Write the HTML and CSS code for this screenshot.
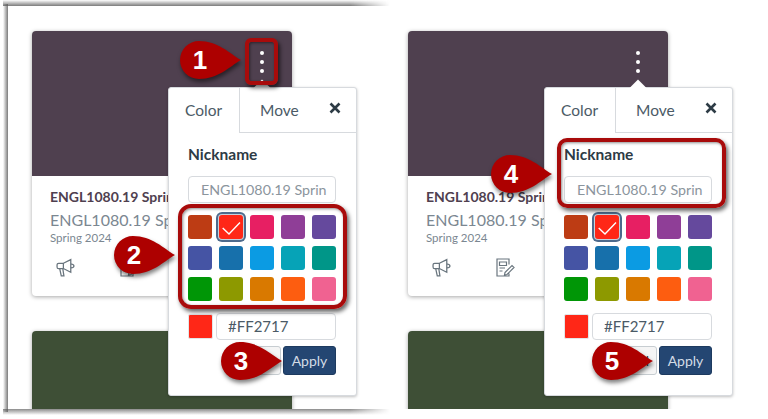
FILE: index.html
```html
<!DOCTYPE html>
<html lang="en">
<head>
    <meta charset="UTF-8">
    <title>Course Card Nickname and Color</title>
    <link rel="stylesheet" href="styles.css">
</head>
<body>
    <svg class="defs" width="0" height="0">
        <symbol id="drop" viewBox="0 0 62 40">
            <path d="M62 20C50 13 39 1 20 1A19 19 0 0 0 20 39C39 39 50 27 62 20Z" fill="#ad0000"/>
        </symbol>
        <symbol id="megaphone" viewBox="0 0 18 18">
            <path d="M7 5L14 1.500V13.500L7 10H2.500Q1 10 1 8.500V6.500Q1 5 2.500 5ZM7 5V10M14 5.500Q17 6 17 7.500Q17 9 14 9.500M3.500 10L5 17H7.500L6.500 10.500" fill="none" stroke="#69757e" stroke-width="1.200"/>
        </symbol>
        <symbol id="assignment" viewBox="0 0 19 19">
            <path d="M13 6.500V1H1V18H13V15.500M3.500 4H10.500V7.500H3.500ZM3.500 10H9M3.500 13H6.500M9 14.500L16 7.500L18 9.500L11 16.500L8.500 17Z" fill="none" stroke="#69757e" stroke-width="1.200"/>
        </symbol>
        <symbol id="close" viewBox="0 0 12 12">
            <path d="M1.500 1.500L10.500 10.500M10.500 1.500L1.500 10.500" fill="none" stroke="#2d3b45" stroke-width="2.600"/>
        </symbol>
        <symbol id="check" viewBox="0 0 24 24">
            <path d="M3.700 13L10 19L21 7.600" fill="none" stroke="#ffffff" stroke-width="1.400"/>
        </symbol>
    </svg>

    <div class="page">
        <div class="shot">
            <div class="card">
                <div class="card-header plum">
                    <div class="dots"><i></i><i></i><i></i></div>
                </div>
                <div class="card-body">
                    <div class="card-title">ENGL1080.19 Spring 2024</div>
                    <div class="card-code">ENGL1080.19 Spring 2024</div>
                    <div class="card-term">Spring 2024</div>
                    <div class="card-icons">
                        <svg class="icon"><use href="#megaphone"/></svg>
                        <svg class="icon"><use href="#assignment"/></svg>
                    </div>
                </div>
            </div>
            <div class="card">
                <div class="card-header green"></div>
            </div>

            <div class="popover">
                <div class="tabs">
                    <div class="tab active">Color</div>
                    <div class="tab">Move <svg class="close"><use href="#close"/></svg></div>
                </div>
                <div class="popover-body">
                    <div class="nickname">Nickname</div>
                    <div class="field">ENGL1080.19 Sprin</div>
                    <div class="swatches">
                        <span class="swatch c1"></span>
                        <span class="swatch c2 selected"><svg class="check"><use href="#check"/></svg></span>
                        <span class="swatch c3"></span>
                        <span class="swatch c4"></span>
                        <span class="swatch c5"></span>
                        <span class="swatch c6"></span>
                        <span class="swatch c7"></span>
                        <span class="swatch c8"></span>
                        <span class="swatch c9"></span>
                        <span class="swatch c10"></span>
                        <span class="swatch c11"></span>
                        <span class="swatch c12"></span>
                        <span class="swatch c13"></span>
                        <span class="swatch c14"></span>
                        <span class="swatch c15"></span>
                    </div>
                    <div class="hex-row">
                        <span class="hex-preview"></span>
                        <div class="hex-field">#FF2717</div>
                    </div>
                    <div class="actions">
                        <div class="btn-cancel">Cancel</div>
                        <div class="btn-apply">Apply</div>
                    </div>
                </div>
            </div>

            <div class="highlight hl-dots"></div>
            <div class="highlight hl-swatches"></div>
            <div class="callout call-1"><svg><use href="#drop"/></svg><span>1</span></div>
            <div class="callout call-2"><svg><use href="#drop"/></svg><span>2</span></div>
            <div class="callout call-3"><svg><use href="#drop"/></svg><span>3</span></div>
        </div>

        <div class="shot">
            <div class="card">
                <div class="card-header plum">
                    <div class="dots"><i></i><i></i><i></i></div>
                </div>
                <div class="card-body">
                    <div class="card-title">ENGL1080.19 Spring 2024</div>
                    <div class="card-code">ENGL1080.19 Spring 2024</div>
                    <div class="card-term">Spring 2024</div>
                    <div class="card-icons">
                        <svg class="icon"><use href="#megaphone"/></svg>
                        <svg class="icon"><use href="#assignment"/></svg>
                    </div>
                </div>
            </div>
            <div class="card">
                <div class="card-header green"></div>
            </div>

            <div class="popover">
                <div class="tabs">
                    <div class="tab active">Color</div>
                    <div class="tab">Move <svg class="close"><use href="#close"/></svg></div>
                </div>
                <div class="popover-body">
                    <div class="nickname">Nickname</div>
                    <div class="field">ENGL1080.19 Sprin</div>
                    <div class="swatches">
                        <span class="swatch c1"></span>
                        <span class="swatch c2 selected"><svg class="check"><use href="#check"/></svg></span>
                        <span class="swatch c3"></span>
                        <span class="swatch c4"></span>
                        <span class="swatch c5"></span>
                        <span class="swatch c6"></span>
                        <span class="swatch c7"></span>
                        <span class="swatch c8"></span>
                        <span class="swatch c9"></span>
                        <span class="swatch c10"></span>
                        <span class="swatch c11"></span>
                        <span class="swatch c12"></span>
                        <span class="swatch c13"></span>
                        <span class="swatch c14"></span>
                        <span class="swatch c15"></span>
                    </div>
                    <div class="hex-row">
                        <span class="hex-preview"></span>
                        <div class="hex-field">#FF2717</div>
                    </div>
                    <div class="actions">
                        <div class="btn-cancel">Cancel</div>
                        <div class="btn-apply">Apply</div>
                    </div>
                </div>
            </div>

            <div class="highlight hl-nickname"></div>
            <div class="callout call-4"><svg><use href="#drop"/></svg><span>4</span></div>
            <div class="callout call-5"><svg><use href="#drop"/></svg><span>5</span></div>
        </div>
    </div>
</body>
</html>
```
FILE: styles.css
```css
* {
    margin: 0;
    padding: 0;
    box-sizing: border-box;
}

body {
    font-family: Lato, 'Noto Sans', sans-serif;
    background-color: white;
    width: 768px;
    height: 419px;
    overflow: hidden;
}

.defs {
    display: block;
}

.page {
    position: relative;
    display: flex;
    padding: 6px 0 0 8px;
}

/* window shadow of the first screenshot, fades out to the right */
.page::before {
    content: "";
    position: absolute;
    left: 0;
    top: 0;
    width: 392px;
    height: 419px;
    background:
        linear-gradient(to bottom, rgba(90, 90, 90, 0), rgba(90, 90, 90, 0.8)) 3px 0 / 100% 6px no-repeat,
        linear-gradient(to top, rgba(90, 90, 90, 0), rgba(90, 90, 90, 0.7)) 3px 409px / 100% 6px no-repeat,
        linear-gradient(to right, rgba(90, 90, 90, 0), rgba(90, 90, 90, 0.8)) 3px 4px / 5px 408px no-repeat;
    -webkit-mask-image: linear-gradient(to right, black 350px, transparent 390px);
    mask-image: linear-gradient(to right, black 350px, transparent 390px);
}

.shot {
    position: relative;
    flex: none;
    width: 376px;
    height: 403px;
    padding: 25px 0 0 24px;
    overflow: hidden;
}

.card {
    width: 260px;
    margin-bottom: 35px;
    background-color: white;
    border-radius: 4px;
    box-shadow: 0 1px 4px rgba(0, 0, 0, 0.35);
    overflow: hidden;
}

.card-header {
    height: 145px;
    padding: 20px 0 0 228px;
}

.plum {
    background-color: #4f404f;
}

.green {
    background-color: #3e4f36;
}

.dots {
    display: flex;
    flex-direction: column;
    gap: 5px;
    width: 4px;
}

.dots i {
    display: block;
    width: 4px;
    height: 4px;
    border-radius: 50%;
    background-color: white;
}

.card-body {
    height: 120px;
    padding: 12px 18px;
    white-space: nowrap;
}

.card-title {
    font-size: 14px;
    font-weight: bold;
    line-height: 18px;
    color: #4f404f;
}

.card-code {
    margin-top: 4px;
    font-size: 16px;
    line-height: 20px;
    color: #7b8791;
}

.card-term {
    margin-top: 1px;
    font-size: 11.5px;
    line-height: 14px;
    color: #7b8791;
}

.card-icons {
    display: flex;
    gap: 45px;
    margin: 13px 0 0 6px;
}

.icon {
    width: 19px;
    height: 19px;
}

.popover {
    position: absolute;
    left: 160px;
    top: 81px;
    width: 189px;
    height: 309px;
    background-color: white;
    border: 1px solid #d7dade;
    border-radius: 3px;
    box-shadow: 0 1px 3px rgba(0, 0, 0, 0.25);
}

.popover::before {
    content: "";
    position: absolute;
    left: 87px;
    top: -6px;
    width: 12px;
    height: 12px;
    background-color: white;
    transform: rotate(45deg);
}

.tabs {
    position: relative;
    display: flex;
    height: 45px;
    font-size: 15.5px;
    line-height: 45px;
    color: #4b5a66;
}

.tab {
    display: flex;
    flex: 1;
    justify-content: space-between;
    align-items: center;
    padding: 0 15px 0 20px;
    border-bottom: 1px solid #d7dade;
}

.tab.active {
    flex: none;
    width: 71px;
    padding: 0 0 0 16px;
    border-right: 1px solid #d7dade;
    border-bottom: none;
}

.close {
    width: 12px;
    height: 12px;
    margin-top: -4px;
}

.popover-body {
    position: relative;
    padding: 11px 20px 0 19px;
}

.nickname {
    font-size: 15.5px;
    font-weight: bold;
    line-height: 20px;
    color: #2d3b45;
}

.field {
    height: 27px;
    margin-top: 12px;
    padding-left: 12px;
    font-size: 14.25px;
    line-height: 25px;
    color: #8b959d;
    white-space: nowrap;
    border: 1px solid #d7dade;
    border-radius: 4px;
}

.swatches {
    display: grid;
    grid-template-columns: repeat(5, 24px);
    justify-content: space-between;
    row-gap: 7px;
    margin-top: 12px;
}

.swatch {
    display: block;
    height: 24px;
    border-radius: 3px;
}

.selected {
    box-shadow: 0 0 0 1px #c5d0dc, 0 0 0 3px #4d6a8c;
}

.check {
    display: block;
    width: 24px;
    height: 24px;
}

.c1 { background-color: #bd3c14; }
.c2 { background-color: #ff2717; }
.c3 { background-color: #e71f63; }
.c4 { background-color: #8f3e97; }
.c5 { background-color: #65499d; }
.c6 { background-color: #4554a4; }
.c7 { background-color: #1770ab; }
.c8 { background-color: #0b9be3; }
.c9 { background-color: #06a3b7; }
.c10 { background-color: #009688; }
.c11 { background-color: #009606; }
.c12 { background-color: #8d9900; }
.c13 { background-color: #d97900; }
.c14 { background-color: #fd5d10; }
.c15 { background-color: #f06291; }

.hex-row {
    display: flex;
    align-items: center;
    gap: 3px;
    margin-top: 12px;
}

.hex-preview {
    flex: none;
    width: 25px;
    height: 25px;
    background-color: #ff2717;
    border: 1px solid #e3e6e8;
    border-radius: 2px;
}

.hex-field {
    flex: 1;
    height: 27px;
    padding-left: 11px;
    font-size: 15px;
    line-height: 25px;
    color: #4b5a66;
    background-color: white;
    border: 1px solid #d7dade;
    border-radius: 4px;
}

.actions {
    display: flex;
    justify-content: flex-end;
    gap: 2px;
    margin-top: 6px;
}

.btn-cancel {
    width: 52px;
    height: 29px;
    padding-right: 7px;
    font-size: 14px;
    line-height: 27px;
    text-align: right;
    color: #2d3b45;
    background-color: #f5f5f5;
    border: 1px solid #c7cdd1;
    border-radius: 3px;
}

.btn-apply {
    width: 53px;
    height: 29px;
    font-size: 14px;
    line-height: 27px;
    text-align: center;
    color: #d3dce6;
    background-color: #244672;
    border: 1px solid #1d3a5f;
    border-radius: 3px;
}

.highlight {
    position: absolute;
    border: 4px solid #a80b0b;
    box-shadow: 2px 3px 4px rgba(0, 0, 0, 0.6), inset 1px 1px 3px rgba(0, 0, 0, 0.45);
}

.hl-dots {
    left: 237px;
    top: 32px;
    width: 33px;
    height: 47px;
    border-radius: 6px;
}

.hl-swatches {
    left: 170px;
    top: 198px;
    width: 169px;
    height: 105px;
    border-radius: 13px;
}

.hl-nickname {
    left: 173px;
    top: 132px;
    width: 169px;
    height: 70px;
    border-radius: 10px;
}

.callout {
    position: absolute;
    width: 62px;
    height: 40px;
}

.callout svg {
    display: block;
    width: 62px;
    height: 40px;
    overflow: visible;
    filter: drop-shadow(1px 3px 2px rgba(0, 0, 0, 0.5));
}

.callout span {
    position: absolute;
    left: 0;
    top: 0;
    width: 42px;
    font-family: 'Liberation Sans', sans-serif;
    font-size: 26px;
    font-weight: bold;
    line-height: 40px;
    text-align: center;
    color: white;
}

.call-1 { left: 171px; top: 34px; }
.call-2 { left: 105px; top: 229px; }
.call-3 { left: 212px; top: 335px; }
.call-4 { left: 106px; top: 148px; }
.call-5 { left: 207px; top: 335px; }
```
